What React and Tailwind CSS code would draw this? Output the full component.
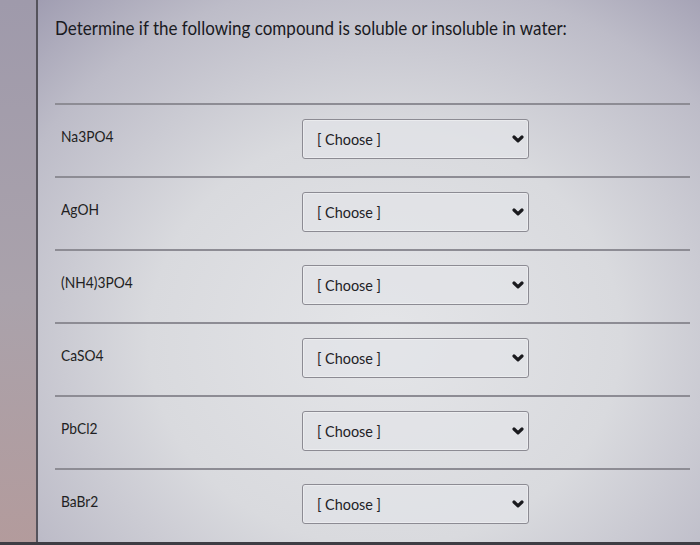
import React from "react";

const compounds = ["Na3PO4", "AgOH", "(NH4)3PO4", "CaSO4", "PbCl2", "BaBr2"];

function Chevron() {
  return (
    <svg width="12" height="8" viewBox="0 0 12 8" className="text-[#1a1a1e]">
      <polyline
        points="2,2 6,5.8 10,2"
        fill="none"
        stroke="currentColor"
        strokeWidth="3.2"
        strokeLinecap="round"
        strokeLinejoin="round"
      />
    </svg>
  );
}

function ChooseSelect() {
  return (
    <div className="flex h-[40px] w-[227px] items-center justify-between rounded-[3px] border border-[#8c8b93] bg-[#e3e4e8]/70 pl-[14px] pr-[4px] shadow-[inset_0_0_0_1px_rgba(255,255,255,0.35)]">
      <span className="origin-left scale-x-[0.9] text-[16px] whitespace-nowrap text-[#222226]">[ Choose ]</span>
      <Chevron />
    </div>
  );
}

function Row({ name }) {
  return (
    <div className="flex h-[73px] items-start border-t-2 border-[#8d8c94] pt-[14px]">
      <div className="w-[247px] pl-[6px] pt-[8px]">
        <div className="origin-left scale-x-[0.92] text-[15px] leading-[18px] whitespace-nowrap text-[#1f1f23]">{name}</div>
      </div>
      <ChooseSelect />
    </div>
  );
}

export default function App() {
  return (
    <div className="relative flex h-[545px] w-[700px] overflow-hidden bg-[radial-gradient(ellipse_75%_85%_at_55%_62%,#e4e5e8_0%,#d9dade_45%,#bdbcc8_78%,#9e9bb0_100%)] font-['Lato','Open_Sans',sans-serif]">
      <div className="h-full w-[36px] shrink-0 bg-[linear-gradient(180deg,#9f9aab_0%,#aaa2ab_55%,#b39b9c_100%)]" />
      <div className="h-full w-[2px] shrink-0 bg-[#55535c]" />
      <div className="flex flex-1 flex-col pl-[17px] pr-[10px]">
        <h1 className="origin-left scale-x-[0.85] pt-[15px] text-[20px] leading-[24px] font-normal whitespace-nowrap text-[#1a1a1f]">
          Determine if the following compound is soluble or insoluble in water:
        </h1>
        <div className="mt-[64px] flex flex-col">
          {compounds.map((c) => (
            <Row key={c} name={c} />
          ))}
        </div>
      </div>
      <div className="absolute bottom-0 left-0 h-[3px] w-full bg-[#3e3d44]" />
    </div>
  );
}
